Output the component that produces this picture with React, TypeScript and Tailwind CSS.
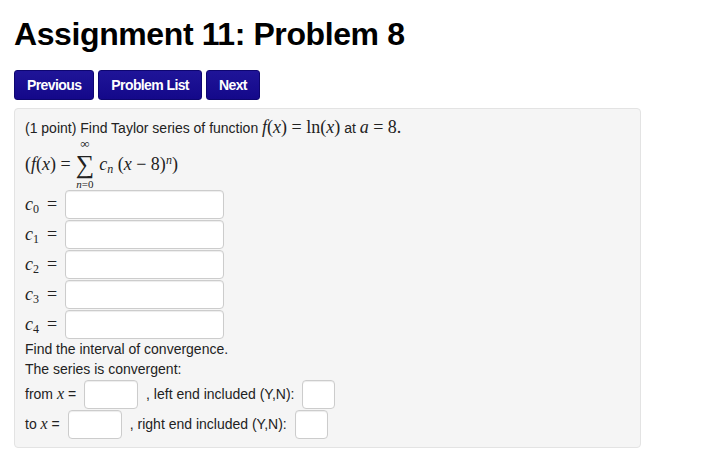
const sans = { fontFamily: '"Liberation Sans", Arial, sans-serif' };

const Input = ({ w }: { w: string }) => (
  <input
    type="text"
    className={`${w} h-[29px] rounded-[4px] border border-[#cccccc] bg-white shadow-[inset_0_1px_1px_rgba(0,0,0,0.075)] outline-none`}
  />
);

const Coef = ({ i }: { i: number }) => (
  <div className="flex h-[30px] items-center">
    <span className="w-[40px] font-['Liberation_Serif'] text-[18px] leading-none text-[#222]">
      <i>c</i>
      <sub className="text-[12px] not-italic">{i}</sub>
      <span className="ml-[8px]">=</span>
    </span>
    <input
      type="text"
      className="h-[29px] w-[159px] rounded-[4px] border border-[#cccccc] bg-white shadow-[inset_0_1px_1px_rgba(0,0,0,0.075)] outline-none"
    />
  </div>
);

export default function App() {
  return (
    <div className="min-h-[472px] bg-white px-[14px] pt-[15px] text-[#222]" style={sans}>
      <h1 className="text-[32px] font-bold leading-[38px] tracking-[-0.4px] text-black">
        Assignment 11: Problem 8
      </h1>

      <div className="mt-[17px] flex gap-[4px]">
        {["Previous", "Problem List", "Next"].map((b) => (
          <button
            key={b}
            className="h-[30px] rounded-[3px] border border-[#0e0670] bg-gradient-to-b from-[#1f1498] to-[#14088a] px-[12px] text-[14px] font-bold tracking-[-0.6px] text-white"
          >
            {b}
          </button>
        ))}
      </div>

      <div className="mt-[8px] w-[627px] rounded-[4px] border border-[#e3e3e3] bg-[#f5f5f5] px-[10px] pb-[8px] pt-[8px] text-[14px]">
        <p className="h-[22px] leading-[22px]">
          (1 point) Find Taylor series of function{" "}
          <span className="font-['Liberation_Serif'] text-[18px] leading-none">
            <i>f</i>(<i>x</i>) = ln(<i>x</i>)
          </span>{" "}
          at{" "}
          <span className="font-['Liberation_Serif'] text-[18px] leading-none">
            <i>a</i> = 8.
          </span>
        </p>

        <div className="flex h-[50px] items-center font-['Liberation_Serif'] text-[18px] leading-none">
          <span>
            (<i>f</i>(<i>x</i>) =
          </span>
          <span className="mx-[5px] flex flex-col items-center leading-none">
            <span className="mb-[6px] text-[13px] leading-[10px]">∞</span>
            <span className="text-[26px] leading-[20px]">∑</span>
            <span className="mt-[3px] text-[11px] leading-[12px]">
              <i>n</i>=0
            </span>
          </span>
          <span>
            <i>c</i>
            <sub className="text-[12px]">
              <i>n</i>
            </sub>{" "}
            (<i>x</i> − 8)
            <sup className="text-[12px]">
              <i>n</i>
            </sup>
            )
          </span>
        </div>

        <div className="flex flex-col">
          {[0, 1, 2, 3, 4].map((i) => (
            <Coef key={i} i={i} />
          ))}
        </div>

        <p className="leading-[20px]">Find the interval of convergence.</p>
        <p className="leading-[20px]">The series is convergent:</p>

        <div className="flex h-[30px] items-center">
          <span>
            from <i className="font-['Liberation_Serif'] text-[16px]">x</i> =
          </span>
          <span className="ml-[8px]">
            <Input w="w-[54px]" />
          </span>
          <span className="ml-[8px]">, left end included (Y,N):</span>
          <span className="ml-[8px]">
            <Input w="w-[33px]" />
          </span>
        </div>
        <div className="flex h-[30px] items-center">
          <span>
            to <i className="font-['Liberation_Serif'] text-[16px]">x</i> =
          </span>
          <span className="ml-[8px]">
            <Input w="w-[54px]" />
          </span>
          <span className="ml-[8px]">, right end included (Y,N):</span>
          <span className="ml-[8px]">
            <Input w="w-[33px]" />
          </span>
        </div>
      </div>
    </div>
  );
}
